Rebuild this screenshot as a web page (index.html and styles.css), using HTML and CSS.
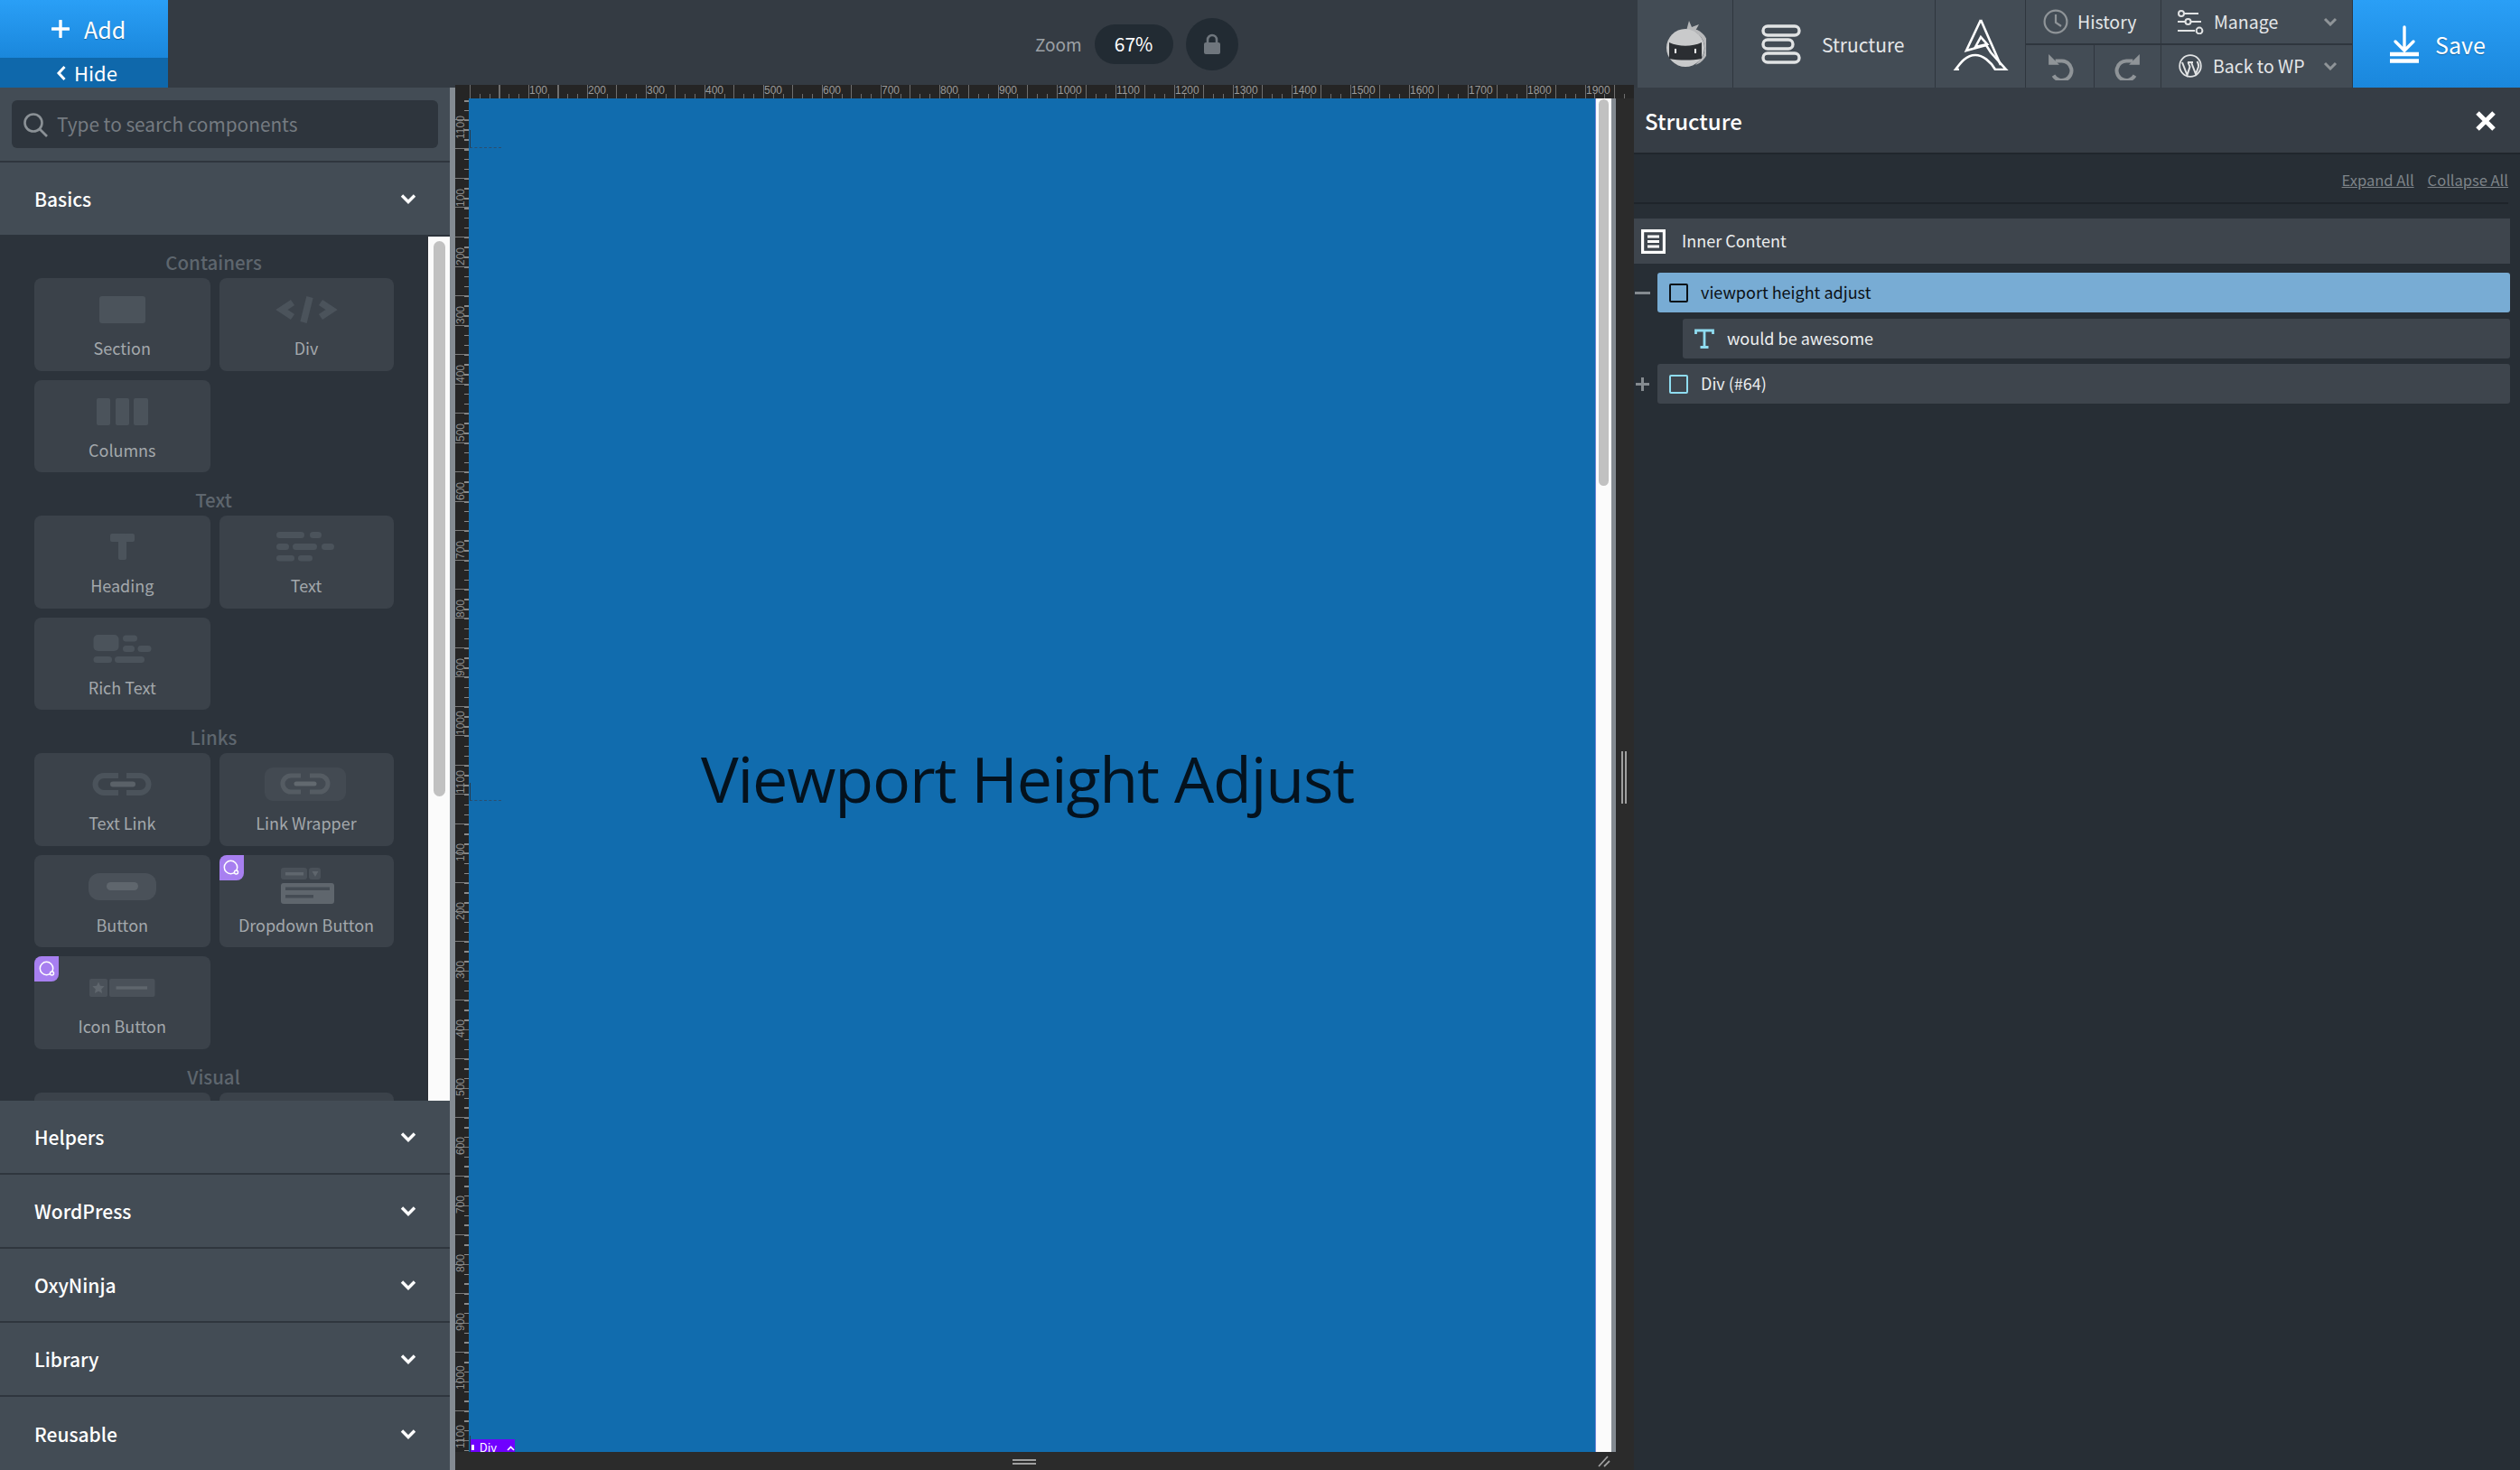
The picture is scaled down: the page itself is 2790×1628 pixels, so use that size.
FILE: index.html
```html
<!DOCTYPE html>
<html lang="en">
<head>
    <meta charset="UTF-8">
    <title>Viewport Height Adjust - Builder</title>
    <link rel="stylesheet" href="styles.css">
</head>
<body>
    <header class="topbar">
        <div class="add-box">
            <div class="add-btn">
                <svg width="20" height="20" viewBox="0 0 20 20"><path d="M10 1v18M1 10h18" stroke="#fff" stroke-width="3.4" stroke-linecap="round"/></svg>
                <span>Add</span>
            </div>
            <div class="hide-btn">
                <svg width="12" height="18" viewBox="0 0 12 18"><path d="M9.5 2 3 9l6.500 7" fill="none" stroke="#fff" stroke-width="3"/></svg>
                <span>Hide</span>
            </div>
        </div>
        <div class="zoom-box">
            <span class="zoom-label">Zoom</span>
            <span class="zoom-value">67%</span>
            <span class="zoom-lock">
                <svg width="22" height="24" viewBox="0 0 22 24"><path d="M6 11V7a5 5 0 0 1 10 0v4" fill="none" stroke="#6f767d" stroke-width="2.600"/><rect x="2" y="10" width="18" height="13" rx="2" fill="#6f767d"/></svg>
            </span>
        </div>
        <div class="tools">
            <div class="tool tool-ninja">
                <svg width="46" height="56" viewBox="0 0 46 56">
                    <path d="M24 14 27 3l3 7 8-3-5 9z" fill="#b5b7b9"/>
                    <circle cx="23" cy="33" r="21" fill="#c9cacb"/>
                    <path d="M28 13a21 21 0 0 1 14 30l-8 9a21 21 0 0 0 2-39z" fill="#b7b8ba"/>
                    <path d="M5 27c11 5 25 5 36 0v18c-11 2-25 2-36 0z" fill="#2b2e32"/>
                    <rect x="11" y="34" width="2" height="5" fill="#fff"/>
                    <rect x="33" y="34" width="2" height="5" fill="#fff"/>
                </svg>
            </div>
            <div class="tool tool-structure">
                <svg width="44" height="44" viewBox="0 0 44 44" fill="none" stroke="#e1e3e4" stroke-width="3.400">
                    <rect x="2" y="2" width="40" height="10" rx="5"/>
                    <rect x="2" y="17" width="33" height="10" rx="5"/>
                    <rect x="2" y="32" width="40" height="10" rx="5"/>
                </svg>
                <span>Structure</span>
            </div>
            <div class="tool tool-logo">
                <svg width="62" height="58" viewBox="0 0 62 58" fill="none" stroke="#fff" stroke-width="2.600">
                    <path d="M31 2 15 36l22-6 5 8 17 19H47C42 48 33 41 25 41 15 41 9 49 3 57h4"/>
                    <path d="M31 2 53 52"/>
                    <path d="M31 21l-6 11 13-3z"/>
                </svg>
            </div>
            <div class="tool tool-history">
                <svg width="28" height="28" viewBox="0 0 28 28" fill="none" stroke="#8f9498" stroke-width="2.200"><circle cx="14" cy="14" r="12.400"/><path d="M14 6v9l6 4"/></svg>
                <span>History</span>
            </div>
            <div class="tool tool-manage">
                <svg width="31" height="27" viewBox="0 0 31 27" fill="none" stroke="#e1e3e4" stroke-width="2"><circle cx="5" cy="4" r="3"/><path d="M8 4h16M1 13h8M16 13h11M1 23h19"/><circle cx="12.500" cy="13" r="3"/><circle cx="25" cy="23" r="3.400"/></svg>
                <span>Manage</span>
                <svg class="tool-caret" width="16" height="10" viewBox="0 0 16 10"><path d="M2 2l6 6 6-6" fill="none" stroke="#8f9498" stroke-width="3"/></svg>
            </div>
            <div class="tool tool-undo">
                <svg width="30" height="30" viewBox="0 0 28 28" fill="none" stroke="#8f9498" stroke-width="3.800"><path d="M9 8h6a10 10 0 1 1-8 15"/><path d="M2 1l11 11H2z" stroke="none" fill="#8f9498"/></svg>
            </div>
            <div class="tool tool-redo">
                <svg width="30" height="30" viewBox="0 0 28 28" fill="none" stroke="#8f9498" stroke-width="3.800"><path d="M19 8h-6a10 10 0 1 0 8 15"/><path d="M26 1 15 12h11z" stroke="none" fill="#8f9498"/></svg>
            </div>
            <div class="tool tool-back">
                <svg width="26" height="26" viewBox="0 0 26 26"><circle cx="13" cy="13" r="11.800" fill="none" stroke="#e1e3e4" stroke-width="1.800"/><path d="M4 9l5.500 14 3-9-2-5M10 9h6M14 9l5 13 3-8c.6-2 0-3.500-1.500-6" fill="none" stroke="#e1e3e4" stroke-width="2"/></svg>
                <span>Back to WP</span>
                <svg class="tool-caret" width="16" height="10" viewBox="0 0 16 10"><path d="M2 2l6 6 6-6" fill="none" stroke="#8f9498" stroke-width="3"/></svg>
            </div>
            <div class="tool tool-save">
                <svg width="36" height="42" viewBox="0 0 36 42" fill="none" stroke="#fff" stroke-width="3.400" stroke-linecap="round"><path d="M18 2v25M8 18l10 10 10-10"/><path d="M2 32h32M2 39.500h32" stroke-linecap="butt" stroke-width="4.400"/></svg>
                <span>Save</span>
            </div>
        </div>
    </header>

    <main class="workspace">
        <aside class="sidebar">
            <div class="search-box">
                <div class="search-input">
                    <svg width="28" height="28" viewBox="0 0 28 28" fill="none" stroke="#8b9196" stroke-width="2.600"><circle cx="12" cy="12" r="9.500"/><path d="M19 19l8 8"/></svg>
                    <span>Type to search components</span>
                </div>
            </div>
            <div class="acc-head acc-basics">
                <span>Basics</span>
                <svg class="chev" width="18" height="12" viewBox="0 0 18 12"><path d="M2 2.500l7 7 7-7" fill="none" stroke="#fff" stroke-width="3.400"/></svg>
            </div>
            <div class="acc-body">
                <div class="comp-list">
                    <h3 class="comp-title">Containers</h3>
                    <div class="comp-grid">
                        <div class="comp-card">
                            <svg class="comp-icon" viewBox="-10 0 100 40"><rect x="15" y="5" width="51" height="30" rx="3"/></svg>
                            <span>Section</span>
                        </div>
                        <div class="comp-card">
                            <svg class="comp-icon" viewBox="-10 0 100 40"><g fill="none" stroke="#4b535b" stroke-width="7.500"><path d="M25 12 13 20l12 8"/><path d="M44 6l-7 28"/><path d="M56 12l12 8-12 8"/></g></svg>
                            <span>Div</span>
                        </div>
                        <div class="comp-card">
                            <svg class="comp-icon" viewBox="-10 0 100 40"><rect x="12" y="5" width="15" height="30" rx="2"/><rect x="33" y="5" width="15" height="30" rx="2"/><rect x="53" y="5" width="16" height="30" rx="2"/></svg>
                            <span>Columns</span>
                        </div>
                    </div>

                    <h3 class="comp-title">Text</h3>
                    <div class="comp-grid">
                        <div class="comp-card">
                            <svg class="comp-icon" viewBox="-10 0 100 40"><rect x="27" y="5" width="27" height="9" rx="2"/><rect x="36" y="5" width="9" height="29" rx="2"/></svg>
                            <span>Heading</span>
                        </div>
                        <div class="comp-card">
                            <svg class="comp-icon" viewBox="-10 0 100 40"><rect x="7" y="3" width="31" height="7" rx="3.500"/><rect x="44" y="3" width="13" height="7" rx="3.500"/><rect x="7" y="16" width="14" height="7" rx="3.500"/><rect x="25" y="16" width="27" height="7" rx="3.500"/><rect x="57" y="16" width="14" height="7" rx="3.500"/><rect x="7" y="29" width="20" height="6.500" rx="3.200"/><rect x="31" y="29" width="16" height="6.500" rx="3.200"/></svg>
                            <span>Text</span>
                        </div>
                        <div class="comp-card">
                            <svg class="comp-icon" viewBox="-10 0 100 40"><rect x="8.500" y="4" width="28" height="18" rx="5"/><rect x="41" y="4.500" width="16" height="7" rx="3.500"/><rect x="41" y="16" width="13" height="7" rx="3.500"/><rect x="57.500" y="16" width="15" height="7" rx="3.500"/><rect x="8.500" y="28" width="20.500" height="7" rx="3.500"/><rect x="32" y="28" width="33" height="7" rx="3.500"/></svg>
                            <span>Rich Text</span>
                        </div>
                    </div>

                    <h3 class="comp-title">Links</h3>
                    <div class="comp-grid">
                        <div class="comp-card">
                            <svg class="comp-icon" viewBox="-10 0 100 40"><g fill="none" stroke="#4b535b" stroke-width="6"><path d="M36 10H20a9.500 9.500 0 0 0 0 19h16"/><path d="M45 10h15a9.500 9.500 0 0 1 0 19H45"/><path d="M30 19.500h22" stroke="#5a6168" stroke-linecap="round"/></g></svg>
                            <span>Text Link</span>
                        </div>
                        <div class="comp-card">
                            <svg class="comp-icon" viewBox="-10 0 100 40"><rect x="-6" y="1" width="90" height="37" rx="9" fill="#434a52"/><g fill="none" stroke="#555c63" stroke-width="5"><path d="M34 10H23a9 9 0 0 0 0 18h11"/><path d="M44 10h11a9 9 0 0 1 0 18H44"/><path d="M29 19h20" stroke="#62696f" stroke-linecap="round"/></g></svg>
                            <span>Link Wrapper</span>
                        </div>
                        <div class="comp-card">
                            <svg class="comp-icon" viewBox="-10 0 100 40"><rect x="3" y="5" width="75" height="30" rx="12" fill="#4a5159"/><rect x="23" y="15" width="35" height="9" rx="4.500" fill="#5f666d"/></svg>
                            <span>Button</span>
                        </div>
                        <div class="comp-card">
                            <span class="pro-badge"><svg width="18" height="18" viewBox="0 0 18 18" fill="none" stroke="#fff" stroke-width="1.500"><circle cx="8.500" cy="8.500" r="7.200"/><circle cx="14.500" cy="14" r="2" fill="#a77ff0"/></svg></span>
                            <svg class="comp-icon" viewBox="-10 0 100 40"><rect x="12" y="-1" width="29" height="13" rx="3" fill="#4a5159"/><rect x="43" y="-1" width="13" height="13" rx="3" fill="#4a5159"/><rect x="17" y="4" width="20" height="3.500" fill="#5f666d"/><path d="M46.500 3h7l-3.500 6z" fill="#5f666d"/><rect x="12" y="16" width="59" height="23" rx="3" fill="#5f666d"/><rect x="17" y="20.500" width="49" height="3.500" fill="#454c54"/><rect x="17" y="29" width="31" height="3.500" fill="#454c54"/></svg>
                            <span>Dropdown Button</span>
                        </div>
                        <div class="comp-card">
                            <span class="pro-badge"><svg width="18" height="18" viewBox="0 0 18 18" fill="none" stroke="#fff" stroke-width="1.500"><circle cx="8.500" cy="8.500" r="7.200"/><circle cx="14.500" cy="14" r="2" fill="#a77ff0"/></svg></span>
                            <svg class="comp-icon" viewBox="-10 0 100 40"><rect x="4" y="10" width="20" height="20" rx="2" fill="#4a5159"/><rect x="26" y="10" width="50.500" height="20" rx="2" fill="#4a5159"/><path d="M14 13.500l2 4.200 4.600.6-3.400 3.200.9 4.500-4.100-2.300-4.100 2.300.9-4.500-3.400-3.200 4.600-.6z" fill="#5f666d"/><rect x="33.500" y="18.300" width="34.500" height="3.400" fill="#5f666d"/></svg>
                            <span>Icon Button</span>
                        </div>
                    </div>

                    <h3 class="comp-title">Visual</h3>
                    <div class="comp-grid">
                        <div class="comp-card"></div>
                        <div class="comp-card"></div>
                    </div>
                </div>
                <div class="list-scroll"><div class="list-thumb"></div></div>
            </div>
            <div class="acc-head"><span>Helpers</span><svg class="chev" width="18" height="12" viewBox="0 0 18 12"><path d="M2 2.500l7 7 7-7" fill="none" stroke="#fff" stroke-width="3.400"/></svg></div>
            <div class="acc-head"><span>WordPress</span><svg class="chev" width="18" height="12" viewBox="0 0 18 12"><path d="M2 2.500l7 7 7-7" fill="none" stroke="#fff" stroke-width="3.400"/></svg></div>
            <div class="acc-head"><span>OxyNinja</span><svg class="chev" width="18" height="12" viewBox="0 0 18 12"><path d="M2 2.500l7 7 7-7" fill="none" stroke="#fff" stroke-width="3.400"/></svg></div>
            <div class="acc-head"><span>Library</span><svg class="chev" width="18" height="12" viewBox="0 0 18 12"><path d="M2 2.500l7 7 7-7" fill="none" stroke="#fff" stroke-width="3.400"/></svg></div>
            <div class="acc-head"><span>Reusable</span><svg class="chev" width="18" height="12" viewBox="0 0 18 12"><path d="M2 2.500l7 7 7-7" fill="none" stroke="#fff" stroke-width="3.400"/></svg></div>
        </aside>

        <div class="side-strip"></div>

        <section class="stage">
            <div class="ruler-top">
                <span>100</span><span>200</span><span>300</span><span>400</span><span>500</span>
                <span>600</span><span>700</span><span>800</span><span>900</span><span>1000</span>
                <span>1100</span><span>1200</span><span>1300</span><span>1400</span><span>1500</span>
                <span>1600</span><span>1700</span><span>1800</span><span>1900</span>
            </div>
            <div class="stage-mid">
                <div class="ruler-left">
                    <span class="first">1100</span>
                    <span class="wide">100</span><span>200</span><span>300</span><span>400</span><span>500</span>
                    <span>600</span><span>700</span><span>800</span><span>900</span><span>1000</span><span>1100</span>
                    <span class="wide">100</span><span>200</span><span>300</span><span>400</span><span>500</span>
                    <span>600</span><span>700</span><span>800</span><span>900</span><span>1000</span><span>1100</span>
                </div>
                <div class="canvas">
                    <h1 class="canvas-title">Viewport Height Adjust</h1>
                    <i class="guide guide-1"></i>
                    <i class="guide guide-2"></i>
                    <i class="guide guide-3"></i>
                    <div class="div-tag"><b></b>Div<svg width="9" height="6" viewBox="0 0 9 6"><path d="M1 5l3.500-3.500L8 5" fill="none" stroke="#fff" stroke-width="1.600"/></svg></div>
                </div>
                <div class="canvas-scroll"><div class="canvas-thumb"></div></div>
                <div class="canvas-edge"></div>
                <div class="side-handle"><i></i><i></i></div>
            </div>
            <div class="stage-bottom">
                <div class="bottom-handle"></div>
                <svg class="bottom-grip" width="14" height="13" viewBox="0 0 14 13"><path d="M1 12 11 1M7 12l6-6" stroke="#a0a0a0" stroke-width="1.800"/></svg>
            </div>
        </section>

        <aside class="structure">
            <div class="structure-head">
                <span>Structure</span>
                <svg width="24" height="22" viewBox="0 0 24 22"><path d="M3 2l18 18M21 2 3 20" stroke="#fff" stroke-width="5"/></svg>
            </div>
            <div class="structure-links">
                <a>Expand All</a>
                <a>Collapse All</a>
            </div>
            <div class="tree">
                <div class="tree-root">
                    <svg width="27" height="27" viewBox="0 0 27 27" fill="none" stroke="#fff"><rect x="1.500" y="1.500" width="24" height="24" stroke-width="3.400"/><path d="M7 8h13M7 13.500h13M7 19h13" stroke-width="2.800"/></svg>
                    <span>Inner Content</span>
                </div>
                <div class="tree-row">
                    <svg class="tree-toggle" width="17" height="17" viewBox="0 0 17 17"><path d="M0 8.500h17" stroke="#858b90" stroke-width="3"/></svg>
                    <div class="tree-item is-active"><i class="box-icon"></i><span>viewport height adjust</span></div>
                </div>
                <div class="tree-row tree-child">
                    <div class="tree-item">
                        <svg width="22" height="22" viewBox="0 0 22 22" fill="none" stroke="#8fdcf0" stroke-width="2.800"><path d="M1.500 6V2h19v4M11 2v19M6.500 20.500h9"/></svg>
                        <span>would be awesome</span>
                    </div>
                </div>
                <div class="tree-row">
                    <svg class="tree-toggle" width="17" height="17" viewBox="0 0 17 17"><path d="M1 8.500h15M8.500 1v15" stroke="#858b90" stroke-width="3"/></svg>
                    <div class="tree-item"><i class="box-icon box-light"></i><span>Div (#64)</span></div>
                </div>
            </div>
        </aside>
    </main>
</body>
</html>
```

FILE: styles.css
```css
* {
    box-sizing: border-box;
}

html, body {
    margin: 0;
    height: 100%;
    overflow: hidden;
}

body {
    width: 2790px;
    height: 1628px;
    background: #272e35;
    font-family: "Noto Sans CJK SC", "Noto Sans", sans-serif;
    color: #fff;
}

svg {
    display: block;
    flex: none;
}

/* top bar */
.topbar {
    display: flex;
    height: 97px;
    background: #343b43;
    position: relative;
    z-index: 2;
}

.add-box {
    width: 186px;
}

.add-btn {
    height: 64px;
    background: linear-gradient(#2a9ff6, #1a87dc);
    display: flex;
    align-items: center;
    gap: 16px;
    padding-left: 57px;
    font-size: 25px;
    line-height: 30px;
    text-shadow: 0 1px 1px rgba(0, 0, 0, 0.3);
}

.hide-btn {
    height: 33px;
    background: #0f68ab;
    display: flex;
    align-items: center;
    gap: 8px;
    padding-left: 62px;
    font-size: 22px;
    line-height: 28px;
}

.hide-btn span {
    margin-top: -2px;
}

.zoom-box {
    flex: 1;
    display: flex;
    align-items: center;
    padding-left: 960px;
}

.zoom-label {
    font-size: 19px;
    color: #9ca1a6;
    line-height: 28px;
    margin-right: 14px;
}

.zoom-value {
    width: 87px;
    height: 44px;
    border-radius: 22px;
    background: #222b33;
    font-size: 21px;
    line-height: 43px;
    text-align: center;
    margin-right: 14px;
}

.zoom-lock {
    width: 58px;
    height: 58px;
    border-radius: 50%;
    background: #222b33;
    display: flex;
    align-items: center;
    justify-content: center;
}

.tools {
    width: 977px;
    display: grid;
    grid-template-columns: 105px 223px 99px 75px 73px 211px 186px;
    grid-template-rows: 48px 47px;
    gap: 2px 1px;
    background: #2f363e;
    height: 97px;
}

.tool {
    background: #434c55;
    display: flex;
    align-items: center;
    font-size: 19.500px;
    line-height: 26px;
    color: #e4e6e8;
    position: relative;
}

.tool-ninja {
    grid-row: 1 / 3;
    grid-column: 1;
    justify-content: center;
    padding-bottom: 2px;
}

.tool-structure {
    grid-row: 1 / 3;
    grid-column: 2;
    padding-left: 31px;
    gap: 23px;
    font-size: 21px;
}

.tool-logo {
    grid-row: 1 / 3;
    grid-column: 3;
    justify-content: center;
}

.tool-history {
    grid-row: 1;
    grid-column: 4 / 6;
    padding-left: 19px;
    gap: 10px;
}

.tool-manage {
    grid-row: 1;
    grid-column: 6;
    padding-left: 17px;
    gap: 10px;
}

.tool-undo {
    grid-row: 2;
    grid-column: 4;
    justify-content: center;
}

.tool-redo {
    grid-row: 2;
    grid-column: 5;
    justify-content: center;
}

.tool-back {
    grid-row: 2;
    grid-column: 6;
    padding-left: 19px;
    padding-bottom: 2px;
    gap: 12px;
}

.tool-caret {
    margin-left: auto;
    margin-right: 16px;
}

.tool-save {
    grid-row: 1 / 3;
    grid-column: 7;
    background: linear-gradient(#2a9ff6, #1a87dc);
    padding-left: 39px;
    gap: 16px;
    font-size: 25px;
    color: #fff;
    text-shadow: 0 1px 1px rgba(0, 0, 0, 0.3);
}

/* main area */
.workspace {
    display: flex;
    height: 1531px;
}

.sidebar {
    width: 498px;
    display: flex;
    flex-direction: column;
    background: #434c55;
}

.side-strip {
    width: 6px;
    background: #848b92;
}

.search-box {
    padding: 14px 13px 0;
    border-bottom: 2px solid #2f363e;
    flex: none;
    height: 83px;
}

.search-input {
    height: 53px;
    background: #2e353d;
    border-radius: 6px;
    display: flex;
    align-items: center;
    gap: 10px;
    padding-left: 12px;
    font-size: 20.800px;
    line-height: 26px;
    color: #757b81;
}

.search-input span {
    margin-top: -1px;
}

.acc-head {
    height: 82px;
    flex: none;
    display: flex;
    align-items: center;
    justify-content: space-between;
    padding: 0 37px 0 38px;
    border-bottom: 2px solid #2f363e;
    font-size: 21px;
    font-weight: 500;
    line-height: 28px;
}

.acc-basics {
    height: 80px;
    border-bottom: 0;
}

.acc-head:last-child {
    border-bottom: 0;
    height: 81px;
}

.acc-body {
    height: 959px;
    flex: none;
    display: flex;
    background: #2c333b;
    overflow: hidden;
}

.comp-list {
    width: 475px;
    padding: 0 0 0 38px;
}

.comp-title {
    height: 48px;
    margin: 0;
    width: 397px;
    text-align: center;
    font-size: 20.500px;
    font-weight: 500;
    line-height: 60px;
    color: #5e666e;
}

.comp-grid {
    display: grid;
    grid-template-columns: 194.500px 193px;
    grid-auto-rows: 102.500px;
    gap: 10px;
}

.comp-card {
    position: relative;
    background: #3b424a;
    border-radius: 8px;
    padding-top: 15px;
    display: flex;
    flex-direction: column;
    align-items: center;
    font-size: 18px;
    line-height: 26px;
    color: #a3a8ac;
}

.comp-card span:last-child {
    margin-top: 9px;
}

.comp-icon {
    width: 100px;
    height: 40px;
    overflow: visible;
    fill: #4b535b;
}

.pro-badge {
    position: absolute;
    left: 0;
    top: 0;
    width: 27px;
    height: 28px;
    background: #a77ff0;
    border-radius: 8px 0 8px 0;
    display: flex;
    align-items: center;
    justify-content: center;
}

.list-scroll {
    width: 25px;
    margin-left: -2px;
    margin-top: 2px;
    background: #fbfbfb;
    border-left: 1px solid #2a2f35;
    padding: 5px 0 0 6px;
}

.list-thumb {
    width: 13px;
    height: 615px;
    border-radius: 7px;
    background: #c1c1c1;
}

/* canvas */
.stage {
    width: 1305px;
    margin-top: -3px;
    display: flex;
    flex-direction: column;
    position: relative;
    z-index: 3;
}

.ruler-top {
    height: 15px;
    display: flex;
    padding-left: 80px;
    background-color: #252525;
    background-image:
        repeating-linear-gradient(to right, #6e6e6e 0 1px, transparent 1px 32.500px),
        repeating-linear-gradient(to right, #6e6e6e 0 1px, transparent 1px 10.830px);
    background-size: 1289px 15px, 1289px 5px;
    background-position: 16px 0, 16px 100%;
    background-repeat: no-repeat;
    overflow: hidden;
    flex: none;
}

.ruler-top span {
    width: 65px;
    flex: none;
    font-family: "Liberation Sans", Arial, sans-serif;
    font-size: 12px;
    line-height: 12px;
    color: #9a9a9a;
    padding-left: 2px;
}

.stage-mid {
    height: 1499px;
    display: flex;
    flex: none;
}

.ruler-left {
    width: 15px;
    flex: none;
    display: flex;
    flex-direction: column;
    overflow: hidden;
    background-color: #252525;
    background-image:
        repeating-linear-gradient(to bottom, transparent 0 23px, #7a7a7a 23px 24px, transparent 24px 32.500px),
        repeating-linear-gradient(to bottom, transparent 0 2px, #8a8a8a 2px 3.500px, transparent 3.500px 10.830px);
    background-size: 15px 100%, 5px 100%;
    background-position: 0 0, 100% 0;
    background-repeat: no-repeat;
}

.ruler-left span {
    height: 65px;
    flex: none;
    width: 12px;
    writing-mode: vertical-rl;
    transform: rotate(180deg);
    font-family: "Liberation Sans", Arial, sans-serif;
    font-size: 12px;
    line-height: 12px;
    color: #8f8f8f;
    padding-top: 1px;
}

.ruler-left .first {
    height: 46px;
}

.ruler-left .wide {
    height: 75px;
}

.canvas {
    width: 1247px;
    flex: none;
    position: relative;
    background: #116cae;
    display: flex;
    align-items: center;
    justify-content: center;
    padding: 6px 10px 0 0;
}

.canvas-title {
    margin: 0;
    font-family: "Open Sans", sans-serif;
    font-weight: 400;
    font-size: 70px;
    letter-spacing: -1.150px;
    line-height: 90px;
    color: #04121e;
}

.guide {
    position: absolute;
    left: 1px;
    width: 35px;
    height: 20px;
    border-left: 1px solid #273a4a;
    border-bottom: 1px dashed #2a4f70;
}

.guide-1 {
    top: 35px;
}

.guide-2 {
    top: 758px;
}

.guide-3 {
    top: 1481px;
    border-bottom: 0;
}

.div-tag {
    position: absolute;
    left: 2px;
    bottom: 0;
    width: 49px;
    height: 14px;
    overflow: hidden;
    background: #7000ff;
    display: flex;
    align-items: flex-start;
    font-size: 13px;
    line-height: 18px;
    padding-left: 1px;
    color: #fff;
}

.div-tag b {
    width: 3px;
    height: 6px;
    background: #fff;
    margin: 6px 6px 0 0;
}

.div-tag svg {
    margin: 7px 0 0 11px;
}

.canvas-scroll {
    width: 18px;
    flex: none;
    background: #fbfbfb;
    border-left: 1px solid #6f86d8;
    padding: 1px 0 0 3px;
}

.canvas-thumb {
    width: 11px;
    height: 428px;
    border-radius: 6px;
    background: #c1c1c1;
}

.canvas-edge {
    width: 5px;
    flex: none;
    background: #848b92;
}

.side-handle {
    width: 20px;
    flex: none;
    background: #2b2b2b;
    display: flex;
    justify-content: center;
    gap: 2px;
    padding-top: 723px;
    padding-right: 3px;
}

.side-handle i {
    width: 2px;
    height: 58px;
    background: #a0a0a0;
}

.stage-bottom {
    height: 20px;
    flex: none;
    background: #2b2b2b;
    position: relative;
}

.bottom-handle {
    position: absolute;
    left: 617px;
    top: 8px;
    width: 26px;
    height: 6px;
    border-top: 2px solid #a0a0a0;
    border-bottom: 2px solid #a0a0a0;
}

.bottom-grip {
    position: absolute;
    left: 1265px;
    top: 4px;
}

/* structure panel */
.structure {
    width: 981px;
    flex: none;
    background: #272e35;
}

.structure-head {
    height: 74px;
    background: #363d45;
    border-bottom: 2px solid #20262c;
    display: flex;
    align-items: center;
    justify-content: space-between;
    padding: 2px 26px 0 12px;
    font-size: 24px;
    font-weight: 500;
    line-height: 30px;
}

.structure-links {
    height: 55px;
    margin-right: 13px;
    border-bottom: 2px solid #1e242a;
    display: flex;
    justify-content: flex-end;
    align-items: center;
    gap: 15px;
    padding-top: 2px;
    font-size: 16.500px;
    line-height: 22px;
    color: #7e8489;
    text-decoration: underline;
}

.tree {
    padding: 16px 11px 0 0;
}

.tree-root {
    height: 50px;
    background: #3e454d;
    display: flex;
    align-items: center;
    gap: 18px;
    padding-left: 8px;
    font-size: 18px;
    line-height: 26px;
    color: #eceeef;
    margin-bottom: 10px;
}

.tree-root span,
.tree-item span {
    margin-top: -2px;
}

.tree-row {
    display: flex;
    margin-bottom: 6.500px;
    align-items: center;
}

.tree-toggle {
    margin: 0 8px 0 1px;
}

.tree-child {
    padding-left: 54px;
}

.tree-item {
    flex: 1;
    height: 44px;
    background: #3e454d;
    border-radius: 3px;
    display: flex;
    align-items: center;
    gap: 14px;
    padding-left: 13px;
    font-size: 18px;
    line-height: 26px;
    color: #eceeef;
}

.tree-item.is-active {
    background: #78acd4;
    color: #0b1116;
}

.box-icon {
    width: 21px;
    height: 21px;
    border: 2px solid #0b1116;
    border-radius: 2px;
}

.box-light {
    border-color: #8fdcf0;
}
```
